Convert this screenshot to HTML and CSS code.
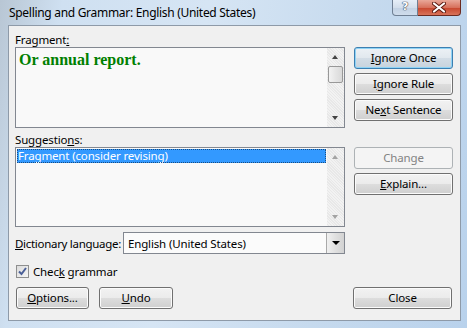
FILE: index.html
```html
<!DOCTYPE html>
<html lang="en">
<head>
    <meta charset="UTF-8">
    <title>Spelling and Grammar</title>
    <link rel="stylesheet" href="styles.css">
</head>
<body>
    <div class="frame">
        <!-- title bar -->
        <div class="titlebar">
            <span class="title">Spelling and Grammar: English (United States)</span>
            <div class="caption-btns">
                <div class="cap-help">?</div>
                <div class="cap-close">
                    <svg width="14" height="11" viewBox="0 0 14 11">
                        <path d="M2 1.5 L12 9.5 M12 1.5 L2 9.5" stroke="#5a1a10" stroke-width="4" stroke-linecap="round"/>
                        <path d="M2 1.5 L12 9.5 M12 1.5 L2 9.5" stroke="#ffffff" stroke-width="2.2" stroke-linecap="round"/>
                    </svg>
                </div>
            </div>
        </div>

        <div class="client">
            <!-- fragment -->
            <div class="row">
                <div class="left">
                    <div class="label">Fragment<u>:</u></div>
                    <div class="box fragment-box">
                        <div class="box-content">
                            <span class="fragment-text">Or annual report.</span>
                        </div>
                        <div class="scrollbar">
                            <div class="arrow up"></div>
                            <div class="thumb"></div>
                            <div class="track"></div>
                            <div class="arrow down"></div>
                        </div>
                    </div>
                </div>
                <div class="right">
                    <button class="btn default"><u>I</u>gnore Once</button>
                    <button class="btn">I<u>g</u>nore Rule</button>
                    <button class="btn">Ne<u>x</u>t Sentence</button>
                </div>
            </div>

            <!-- suggestions -->
            <div class="row suggestions-row">
                <div class="left">
                    <div class="label">Suggestio<u>n</u>s:</div>
                    <div class="box list-box">
                        <div class="box-content">
                            <div class="list-item selected">Fragment (consider revising)</div>
                        </div>
                        <div class="scrollbar">
                            <div class="arrow up disabled"></div>
                            <div class="track"></div>
                            <div class="arrow down disabled"></div>
                        </div>
                    </div>
                </div>
                <div class="right">
                    <button class="btn disabled">Change</button>
                    <button class="btn"><u>E</u>xplain...</button>
                </div>
            </div>

            <!-- dictionary -->
            <div class="dict-row">
                <span class="dict-label"><u>D</u>ictionary language:</span>
                <div class="combo">
                    <span class="combo-text">English (United States)</span>
                    <div class="combo-btn"><div class="arrow-down-black"></div></div>
                </div>
            </div>

            <div class="check-row">
                <div class="checkbox">
                    <svg width="11" height="11" viewBox="0 0 11 11">
                        <path d="M2 5.5 L4.5 8 L9 2" fill="none" stroke="#4a5f97" stroke-width="2"/>
                    </svg>
                </div>
                <span>Chec<u>k</u> grammar</span>
            </div>

            <div class="bottom-row">
                <button class="btn small"><u>O</u>ptions...</button>
                <button class="btn undo"><u>U</u>ndo</button>
                <button class="btn close">Close</button>
            </div>
        </div>
    </div>
</body>
</html>
```

FILE: styles.css
```css
body {
    margin: 0;
    width: 467px;
    height: 328px;
    overflow: hidden;
    font-family: "Noto Sans", "Open Sans", sans-serif;
    font-size: 11.5px;
    letter-spacing: -0.15px;
    color: #000;
}
.frame {
    width: 467px;
    height: 328px;
    background: linear-gradient(100deg, #b8c6d4 0%, #cfe0f1 12%, #d6e5f4 40%, #c6daee 70%, #b9d2ec 100%);
    display: flex;
    flex-direction: column;
}
.titlebar {
    height: 25px;
    flex-shrink: 0;
    display: flex;
    align-items: flex-start;
}
.title {
    margin-left: 9px;
    margin-top: 4px;
    font-size: 12px;
    letter-spacing: -0.3px;
}
.caption-btns {
    margin-left: auto;
    margin-right: 6px;
    display: flex;
}
.cap-help {
    width: 24px;
    height: 15px;
    border: 1px solid #6f7f93;
    border-top: none;
    border-radius: 0 0 0 4px;
    background: linear-gradient(#e6eef7, #d3deeb 50%, #c2d1e3 51%, #cfdcec);
    color: #fff;
    font-family: "DejaVu Sans", sans-serif;
    font-weight: bold;
    font-size: 11px;
    line-height: 14px;
    text-align: center;
    overflow: hidden;
    text-shadow: 0 0 1px #39475a, 0 0 1px #39475a, 0 0 1px #39475a;
}
.cap-close {
    width: 42px;
    height: 15px;
    border: 1px solid #6b2a20;
    border-left: none;
    border-top: none;
    border-radius: 0 0 4px 0;
    background: linear-gradient(#e9a899, #d7715c 50%, #c7452c 51%, #d8735a);
    display: flex;
    align-items: center;
    justify-content: center;
}
.client {
    margin-left: 8px;
    width: 445px;
    height: 288px;
    border: 1px solid #8e9aa8;
    background-color: #f0f0f0;
    padding: 6px 0 0 6px;
    box-sizing: content-box;
}
.row {
    display: flex;
    gap: 9px;
}
.left {
    width: 330px;
    display: flex;
    flex-direction: column;
}
.right {
    padding-top: 15px;
    display: flex;
    flex-direction: column;
    gap: 4px;
}
.label {
    height: 15px;
    line-height: 15px;
}
.box {
    border: 1px solid #828790;
    background-color: #f9f9f9;
    display: flex;
    box-sizing: border-box;
}
.fragment-box {
    height: 81px;
}
.list-box {
    height: 80px;
}
.suggestions-row {
    margin-top: 4px;
}
.box-content {
    flex: 1;
    padding: 1px;
}
.fragment-text {
    display: block;
    margin: 2px 0 0 2px;
    font-family: "Liberation Serif", serif;
    font-weight: bold;
    font-size: 16px;
    letter-spacing: 0;
    color: #008000;
}
.list-item {
    height: 14px;
    line-height: 14px;
    padding-left: 1px;
}
.list-item.selected {
    background-color: #3399ff;
    color: #fff;
    outline: 1px dotted #1a4d80;
    outline-offset: -1px;
}
.scrollbar {
    width: 17px;
    background: repeating-linear-gradient(45deg, #f2f2f2 0 1px, #e8e8e8 1px 2px);
    display: flex;
    flex-direction: column;
    align-items: center;
}
.scrollbar .track {
    flex: 1;
}
.arrow {
    width: 17px;
    height: 17px;
    position: relative;
}
.arrow::after {
    content: "";
    position: absolute;
    left: 5px;
    top: 7px;
    border-left: 3px solid transparent;
    border-right: 3px solid transparent;
}
.arrow.up::after {
    border-bottom: 4px solid #444;
}
.arrow.down::after {
    top: 6px;
    border-top: 4px solid #444;
}
.arrow.disabled.up::after {
    border-bottom-color: #a3a3a3;
}
.arrow.disabled.down::after {
    border-top-color: #a3a3a3;
}
.thumb {
    width: 13px;
    height: 15px;
    border: 1px solid #989898;
    border-radius: 2px;
    background: linear-gradient(to right, #f3f3f3, #e5e5e5 50%, #d9d9d9);
    box-sizing: content-box;
    margin-top: 1px;
}
.btn {
    font-family: inherit;
    font-size: 11.5px;
    letter-spacing: -0.15px;
    width: 99px;
    height: 22px;
    padding: 0;
    border: 1px solid #707070;
    border-radius: 3px;
    background: linear-gradient(#f2f2f2, #ebebeb 50%, #dddddd 51%, #cfcfcf);
    box-shadow: inset 0 0 0 1px #fbfbfb;
    color: #000;
    line-height: 18px;
}
.btn.default {
    border-color: #3c7fb1;
    box-shadow: inset 0 0 0 1px #8fd3f5;
    background: linear-gradient(#ecf1f5, #e1e8ee 50%, #d3dde6 51%, #c8d3dd);
}
.btn.disabled {
    border-color: #adb2b5;
    background: #f4f4f4;
    box-shadow: none;
    color: #838383;
}
.dict-row {
    margin-top: 5px;
    display: flex;
    align-items: center;
    height: 22px;
}
.dict-label {
    width: 108px;
    flex-shrink: 0;
    white-space: nowrap;
    letter-spacing: -0.3px;
}
.combo {
    width: 222px;
    height: 22px;
    box-sizing: border-box;
    border: 1px solid #828790;
    background: #fbfbfb;
    display: flex;
    align-items: center;
}
.combo-text {
    flex: 1;
    padding-left: 4px;
}
.combo-btn {
    width: 17px;
    height: 20px;
    border-left: 1px solid #a9a9a9;
    background: linear-gradient(to right, #f0f0f0, #e0e0e0 50%, #d2d2d2);
    display: flex;
    align-items: center;
    justify-content: center;
}
.arrow-down-black {
    border-left: 4px solid transparent;
    border-right: 4px solid transparent;
    border-top: 4px solid #000;
}
.check-row {
    margin-top: 11px;
    display: flex;
    align-items: center;
    gap: 4px;
    height: 13px;
    padding-left: 1px;
}
.checkbox {
    width: 11px;
    height: 11px;
    border: 1px solid #8e8f8f;
    background: linear-gradient(135deg, #dcdcdc, #f5f5f5);
    display: flex;
}
.bottom-row {
    margin-top: 9px;
    display: flex;
    padding-left: 1px;
}
.btn.small {
    width: 73px;
}
.btn.undo {
    width: 74px;
    margin-left: 10px;
}
.btn.close {
    margin-left: auto;
    margin-right: 8px;
}
```
